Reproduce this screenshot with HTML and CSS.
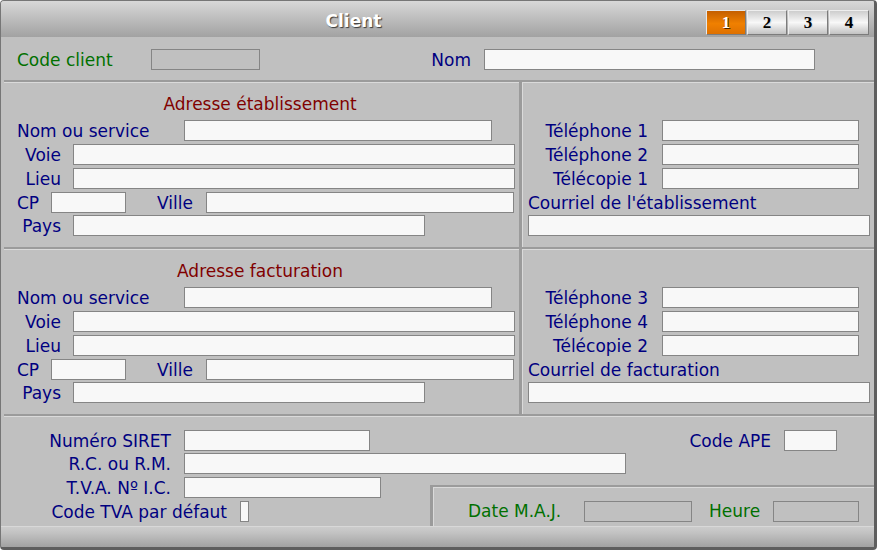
FILE: index.html
```html
<!DOCTYPE html>
<html lang="fr">
<head>
<meta charset="utf-8">
<title>Client</title>
<link rel="stylesheet" href="styles.css">
</head>
<body>
<div class="window">
  <div class="titlebar">
    <div class="title">Client</div>
    <div class="tabs">
      <div class="tab active">1</div>
      <div class="tab">2</div>
      <div class="tab">3</div>
      <div class="tab">4</div>
    </div>
  </div>

  <div class="body">
    <div class="toprow">
      <span class="lbl green l-code">Code client</span>
      <span class="field ro w-code"></span>
      <span class="lbl right l-nom">Nom</span>
      <span class="field w-nom"></span>
    </div>

    <div class="panels">
      <section class="panel pleft">
        <div class="ptitle">Adresse établissement</div>
        <div class="row">
          <span class="lbl l-service">Nom ou service</span>
          <span class="field w-service"></span>
        </div>
        <div class="row">
          <span class="lbl right l-short">Voie</span>
          <span class="field w-voie"></span>
        </div>
        <div class="row">
          <span class="lbl right l-short">Lieu</span>
          <span class="field w-voie"></span>
        </div>
        <div class="row">
          <span class="lbl l-cp">CP</span>
          <span class="field w-cp"></span>
          <span class="lbl l-ville">Ville</span>
          <span class="field w-ville"></span>
        </div>
        <div class="row tight">
          <span class="lbl right l-short">Pays</span>
          <span class="field w-pays"></span>
        </div>
      </section>

      <section class="panel pright">
        <div class="row">
          <span class="lbl right l-tel">Téléphone 1</span>
          <span class="field w-tel"></span>
        </div>
        <div class="row">
          <span class="lbl right l-tel">Téléphone 2</span>
          <span class="field w-tel"></span>
        </div>
        <div class="row">
          <span class="lbl right l-tel">Télécopie 1</span>
          <span class="field w-tel"></span>
        </div>
        <div class="row">
          <span class="lbl l-mail">Courriel de l'établissement</span>
        </div>
        <div class="row tight">
          <span class="field w-mail"></span>
        </div>
      </section>

      <section class="panel pleft">
        <div class="ptitle">Adresse facturation</div>
        <div class="row">
          <span class="lbl l-service">Nom ou service</span>
          <span class="field w-service"></span>
        </div>
        <div class="row">
          <span class="lbl right l-short">Voie</span>
          <span class="field w-voie"></span>
        </div>
        <div class="row">
          <span class="lbl right l-short">Lieu</span>
          <span class="field w-voie"></span>
        </div>
        <div class="row">
          <span class="lbl l-cp">CP</span>
          <span class="field w-cp"></span>
          <span class="lbl l-ville">Ville</span>
          <span class="field w-ville"></span>
        </div>
        <div class="row tight">
          <span class="lbl right l-short">Pays</span>
          <span class="field w-pays"></span>
        </div>
      </section>

      <section class="panel pright">
        <div class="row">
          <span class="lbl right l-tel">Téléphone 3</span>
          <span class="field w-tel"></span>
        </div>
        <div class="row">
          <span class="lbl right l-tel">Téléphone 4</span>
          <span class="field w-tel"></span>
        </div>
        <div class="row">
          <span class="lbl right l-tel">Télécopie 2</span>
          <span class="field w-tel"></span>
        </div>
        <div class="row">
          <span class="lbl l-mail">Courriel de facturation</span>
        </div>
        <div class="row tight">
          <span class="field w-mail"></span>
        </div>
      </section>
    </div>

    <section class="legal">
      <div class="row">
        <span class="lbl right l-legal">Numéro SIRET</span>
        <span class="field w-siret"></span>
        <span class="lbl right l-ape">Code APE</span>
        <span class="field w-ape"></span>
      </div>
      <div class="row narrow">
        <span class="lbl right l-legal">R.C. ou R.M.</span>
        <span class="field w-rc"></span>
      </div>
      <div class="lower">
        <div class="lcol">
          <div class="row">
            <span class="lbl right l-legal">T.V.A. Nº I.C.</span>
            <span class="field w-tva"></span>
          </div>
          <div class="row">
            <span class="lbl right l-codetva">Code TVA par défaut</span>
            <span class="field w-codetva"></span>
          </div>
        </div>
        <div class="datebox">
          <span class="lbl green l-date">Date M.A.J.</span>
          <span class="field ro w-date"></span>
          <span class="lbl green l-heure">Heure</span>
          <span class="field ro w-heure"></span>
        </div>
      </div>
    </section>
  </div>

  <div class="statusbar"></div>
</div>
</body>
</html>
```

FILE: styles.css
```css
* { box-sizing: border-box; }

html, body {
  margin: 0;
  padding: 0;
  background: #ffffff;
}

body {
  font-family: "DejaVu Sans", Verdana, sans-serif;
  font-size: 17px;
  line-height: 20px;
}

.window {
  width: 877px;
  height: 550px;
  border: 1px solid #767676;
  border-right: 3px solid #5e5e5e;
  border-bottom: 3px solid #5e5e5e;
  border-radius: 4px;
  background: #c0c0c0;
  display: flex;
  flex-direction: column;
  overflow: hidden;
}

/* ---------- title bar ---------- */
.titlebar {
  height: 36px;
  flex: none;
  display: flex;
  align-items: flex-start;
  background: linear-gradient(#d8d8d8, #a2a2a2);
}

.title {
  flex: 1;
  text-align: center;
  padding-top: 10px;
  font-weight: bold;
  color: #ffffff;
  text-shadow: 1px 1px 1px #3a3a3a;
}

.tabs {
  display: flex;
  gap: 1px;
  margin-top: 9px;
  margin-right: 5px;
}

.tab {
  width: 40px;
  height: 25px;
  font: bold 17px/23px "Liberation Serif", "Times New Roman", serif;
  text-align: center;
  color: #000000;
  border: 1px solid;
  border-color: #eeeeee #7c7c7c #7c7c7c #eeeeee;
  background: linear-gradient(#cdcdcd, #f8f8f8 50%, #c2c2c2);
  text-shadow: 1px 1px 0 #d8d8d8;
}

.tab.active {
  color: #ffffff;
  border-color: #e8e8e8 #7c7c7c #7c7c7c #e8e8e8;
  background: linear-gradient(#c45f00, #f08000 55%, #de7000);
  text-shadow: 1px 1px 0 #4a2400;
}

/* ---------- body ---------- */
.body {
  flex: 1;
  display: flex;
  flex-direction: column;
  padding-left: 3px;
}

.toprow {
  height: 43px;
  flex: none;
  display: flex;
  align-items: center;
  padding-top: 12px;
  padding-bottom: 10px;
}

.row {
  display: flex;
  align-items: center;
  height: 21px;
  flex: none;
}

.row + .row { margin-top: 3px; }
.row.tight { margin-top: 2px; }
.row.narrow { margin-top: 2px; }

.lbl {
  flex: none;
  white-space: nowrap;
  color: #000080;
}

.lbl.right { text-align: right; }
.lbl.green { color: #007000; }

.field {
  display: block;
  flex: none;
  height: 21px;
  border: 1px solid #858585;
  background: #f8f8f8;
}

.field.ro { background: transparent; }

/* top row */
.l-code { margin-left: 13px; width: 134px; }
.w-code { width: 109px; }
.l-nom { width: 224px; padding-right: 13px; }
.w-nom { width: 331px; }

/* ---------- panels ---------- */
.panels {
  display: grid;
  grid-template-columns: 515px 355px;
  grid-template-rows: 167px 167px;
  flex: none;
}

.panel {
  border-top: 2px solid #9b9b9b;
}

.pleft {
  padding-top: 12px;
  box-shadow: inset 0 1px 0 #dadada;
}

.pright {
  border-left: 3px solid #9b9b9b;
  padding-top: 38px;
  box-shadow: inset 1px 1px 0 #dadada;
}

.ptitle {
  height: 20px;
  margin-bottom: 6px;
  padding-right: 3px;
  text-align: center;
  color: #800000;
}

.l-service { margin-left: 13px; width: 167px; }
.w-service { width: 308px; }
.l-short { width: 69px; padding-right: 12px; }
.w-voie { width: 442px; }
.l-cp { margin-left: 13px; width: 34px; }
.w-cp { width: 75px; }
.l-ville { width: 80px; padding-left: 31px; }
.w-ville { width: 308px; }
.w-pays { width: 352px; }

.l-tel { width: 140px; padding-right: 14px; }
.w-tel { width: 197px; }
.l-mail { margin-left: 6px; }
.w-mail { margin-left: 6px; width: 342px; }

/* ---------- legal section ---------- */
.legal {
  height: 112px;
  flex: none;
  display: flex;
  flex-direction: column;
  border-top: 2px solid #9b9b9b;
  box-shadow: inset 0 1px 0 #dadada;
  padding-top: 14px;
}

.l-legal { width: 180px; padding-right: 13px; }
.w-siret { width: 186px; }
.l-ape { width: 414px; padding-right: 13px; }
.w-ape { width: 53px; }
.w-rc { width: 442px; }
.w-tva { width: 197px; }
.l-codetva { width: 236px; padding-right: 13px; }
.w-codetva { width: 9px; }

.lower {
  flex: 1;
  display: flex;
  margin-top: 3px;
}

.lcol {
  width: 426px;
  flex: none;
}

.datebox {
  flex: 1;
  margin-top: 8px;
  display: flex;
  align-items: flex-start;
  padding-top: 14px;
  border-top: 2px solid #9b9b9b;
  border-left: 3px solid #9b9b9b;
  box-shadow: inset 1px 1px 0 #dadada;
}

.datebox .lbl,
.datebox .field { height: 21px; line-height: 21px; }

.l-date { width: 151px; padding-left: 35px; }
.w-date { width: 108px; }
.l-heure { width: 81px; padding-left: 17px; }
.w-heure { width: 86px; }

/* ---------- status bar ---------- */
.statusbar {
  height: 21px;
  flex: none;
  border-top: 1px solid #d8d8d8;
  background: linear-gradient(#cccccc, #c2c2c2 30%, #a2a2a2);
}
```
